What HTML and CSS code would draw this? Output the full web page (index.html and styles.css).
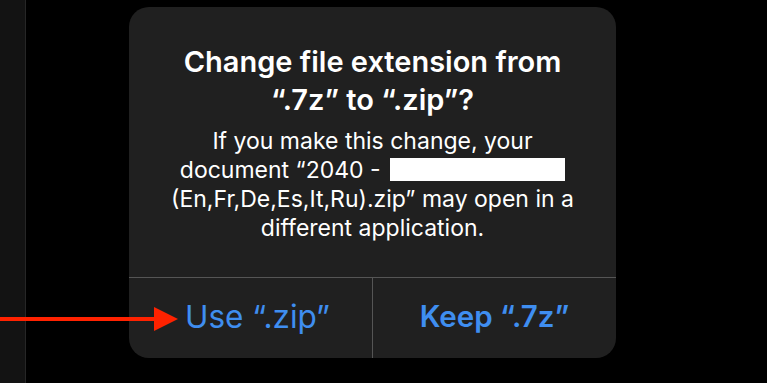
FILE: index.html
```html
<!DOCTYPE html>
<html>
<head>
<meta charset="utf-8">
<link rel="stylesheet" href="styles.css">
</head>
<body>
<div class="screen">
  <div class="sidebar"></div>
  <main class="stage">
    <div class="alert">
      <div class="content">
        <h1 class="title">Change file extension from<br>“.7z” to “.zip”?</h1>
        <p class="message">If you make this change, your<br>document “2040 - <span class="redact"></span><br>(En,Fr,De,Es,It,Ru).zip” may open in a<br>different application.</p>
      </div>
      <div class="actions">
        <button class="action secondary">Use “.zip”</button>
        <button class="action primary">Keep “.7z”</button>
      </div>
    </div>
  </main>
  <svg class="arrow" width="180" height="30" viewBox="0 0 180 30">
    <rect x="0" y="10" width="160" height="4" fill="#ff2200"/>
    <polygon points="154,0 178,12 154,24" fill="#ff2200"/>
  </svg>
</div>
</body>
</html>
```
FILE: styles.css
```css
* { box-sizing: border-box; }
html, body { margin: 0; padding: 0; background: #000; }
.screen {
  position: relative;
  width: 767px;
  height: 383px;
  display: flex;
  overflow: hidden;
  font-family: Inter, "Liberation Sans", sans-serif;
}
.sidebar {
  width: 26px;
  flex: none;
  background: #131313;
  border-right: 1px solid #262626;
}
.stage {
  flex: 1;
  padding: 7px 0 0 103px;
}
.alert {
  width: 487px;
  height: 351px;
  background: #202020;
  border-radius: 20px;
  display: flex;
  flex-direction: column;
  overflow: hidden;
}
.content {
  height: 271px;
  padding-top: 36px;
  text-align: center;
  color: #fff;
  border-bottom: 1px solid #555;
}
.title {
  margin: 0;
  font-size: 29px;
  font-weight: 600;
  line-height: 38px;
  letter-spacing: 0;
}
.message {
  margin: 8px 0 0;
  font-size: 23px;
  font-weight: 400;
  line-height: 29px;
}
.redact {
  display: inline-block;
  width: 175px;
  height: 23px;
  margin-left: 3px;
  background: #fff;
  vertical-align: -3px;
}
.actions {
  flex: 1;
  display: grid;
  grid-template-columns: 243px 1fr;
}
.action {
  border: 0;
  background: transparent;
  color: #3f8ef0;
  font-family: inherit;
  font-size: 31.5px;
  font-weight: 400;
  padding: 0 0 4px;
}
.action.secondary { text-indent: 14px; }
.action + .action { border-left: 1px solid #555; }
.action.primary { font-weight: 600; font-size: 29.5px; }
.arrow {
  position: absolute;
  left: 0;
  top: 307px;
}
```
